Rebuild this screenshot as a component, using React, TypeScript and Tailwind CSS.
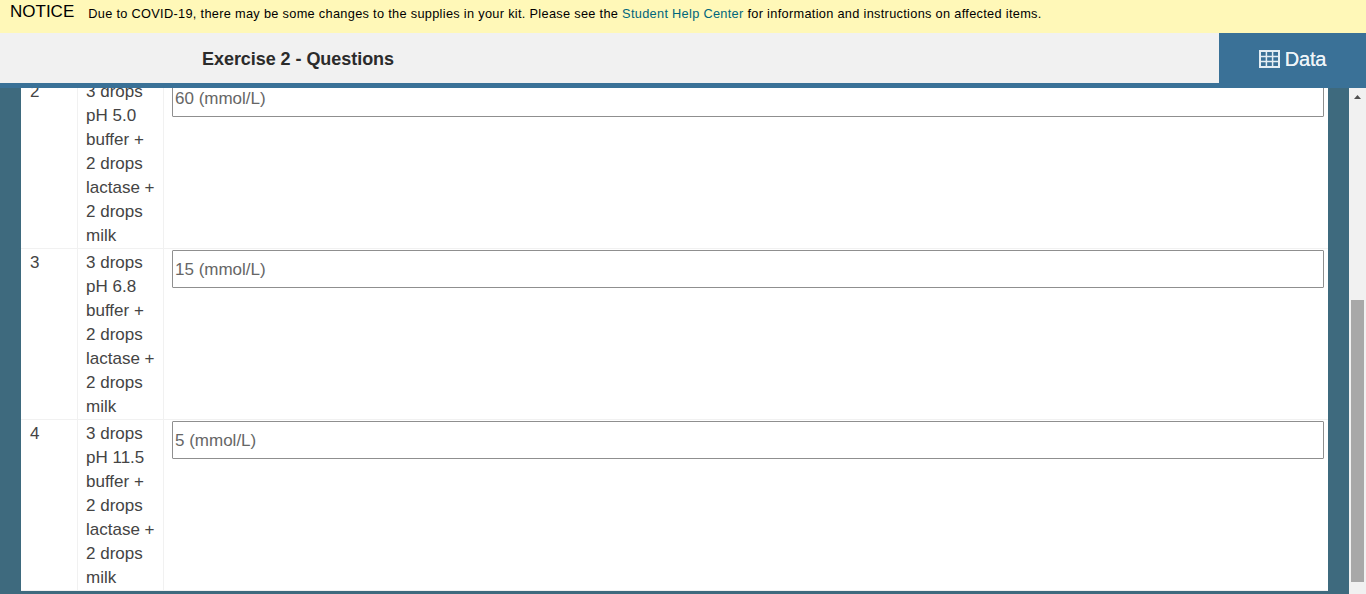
const ROWS = [
  { n: 2, ph: '5.0', value: '60 (mmol/L)' },
  { n: 3, ph: '6.8', value: '15 (mmol/L)' },
  { n: 4, ph: '11.5', value: '5 (mmol/L)' },
]

export default function App() {
  return (
    <div className="w-[1366px] h-[594px] overflow-hidden flex flex-col font-['Liberation_Sans',Arial,sans-serif] text-[#333]">
      <div className="h-[33px] flex-shrink-0 bg-[#fff8b8] flex items-start pl-[10px] text-black">
        <span className="text-[17px] leading-[23px] mr-[14px]">NOTICE</span>
        <span className="text-[12.75px] leading-[27px] tracking-[0.312px]">
          Due to COVID-19, there may be some changes to the supplies in your kit. Please see the{' '}
          <span className="text-[#00667c]">Student Help Center</span> for information and instructions on affected items.
        </span>
      </div>

      <div className="h-[55px] flex-shrink-0 flex bg-[#3a7197]">
        <div className="flex-1 h-[50px] bg-[#f1f1f1] pl-[202px] flex items-center">
          <h1 className="text-[18px] font-bold text-[#2b2b2b] leading-[52px] pt-[2px] tracking-[-0.05px]">Exercise 2 - Questions</h1>
        </div>
        <div className="w-[147px] flex items-center justify-center gap-[5px] pb-[4px] text-[#eef4f8] text-[20px]">
          <svg width="21" height="18" viewBox="0 0 21 18" className="fill-none stroke-[#e4eef4]">
            <path strokeWidth="2" d="M1 1h19v16H1z" />
            <path strokeWidth="1.5" d="M7.4 1v16M13.6 1v16M1 6.4h19M1 11.6h19" />
          </svg>
          <span className="tracking-[-0.2px] [text-shadow:0_0_0.5px_#eef4f8]">Data</span>
        </div>
      </div>

      <div className="flex-1 min-h-0 flex bg-[#3e6a7e]">
        <div className="flex-1 min-w-0 overflow-hidden pl-[21px] pr-[21px] pb-[3px]">
          <div className="h-full overflow-hidden bg-white">
            <div className="-mt-[10px]">
              {ROWS.map(row => (
                <div key={row.n} className="flex h-[171px] border-b border-[#f1f1f1] text-[#444] text-[17px] leading-[24px]">
                  <div className="w-[57px] flex-shrink-0 border-r border-[#f1f1f1] pl-[9px] pt-[2px]">{row.n}</div>
                  <div className="w-[86px] flex-shrink-0 border-r border-[#f1f1f1] pl-[8px] pt-[2px]">
                    3 drops<br />pH {row.ph}<br />buffer +<br />2 drops<br />lactase +<br />2 drops<br />milk
                  </div>
                  <div className="flex-1 pl-[8px] pr-[4px] pt-px">
                    <div className="h-[38px] border border-[#8f8f8f] rounded-[1px] pl-[2px] pt-[2px] flex items-center text-[#666]">
                      {row.value}
                    </div>
                  </div>
                </div>
              ))}
            </div>
          </div>
        </div>

        <div className="w-[17px] flex-shrink-0 bg-[#f1f1f1] flex flex-col items-center pb-[12px]">
          <svg width="7" height="4" viewBox="0 0 7 4" className="mt-[7px] fill-[#505050]">
            <path d="M3.5 0 7 4H0z" />
          </svg>
          <div className="w-[13px] h-[282px] bg-[#a8a8a8] mt-auto" />
        </div>
      </div>
    </div>
  )
}
